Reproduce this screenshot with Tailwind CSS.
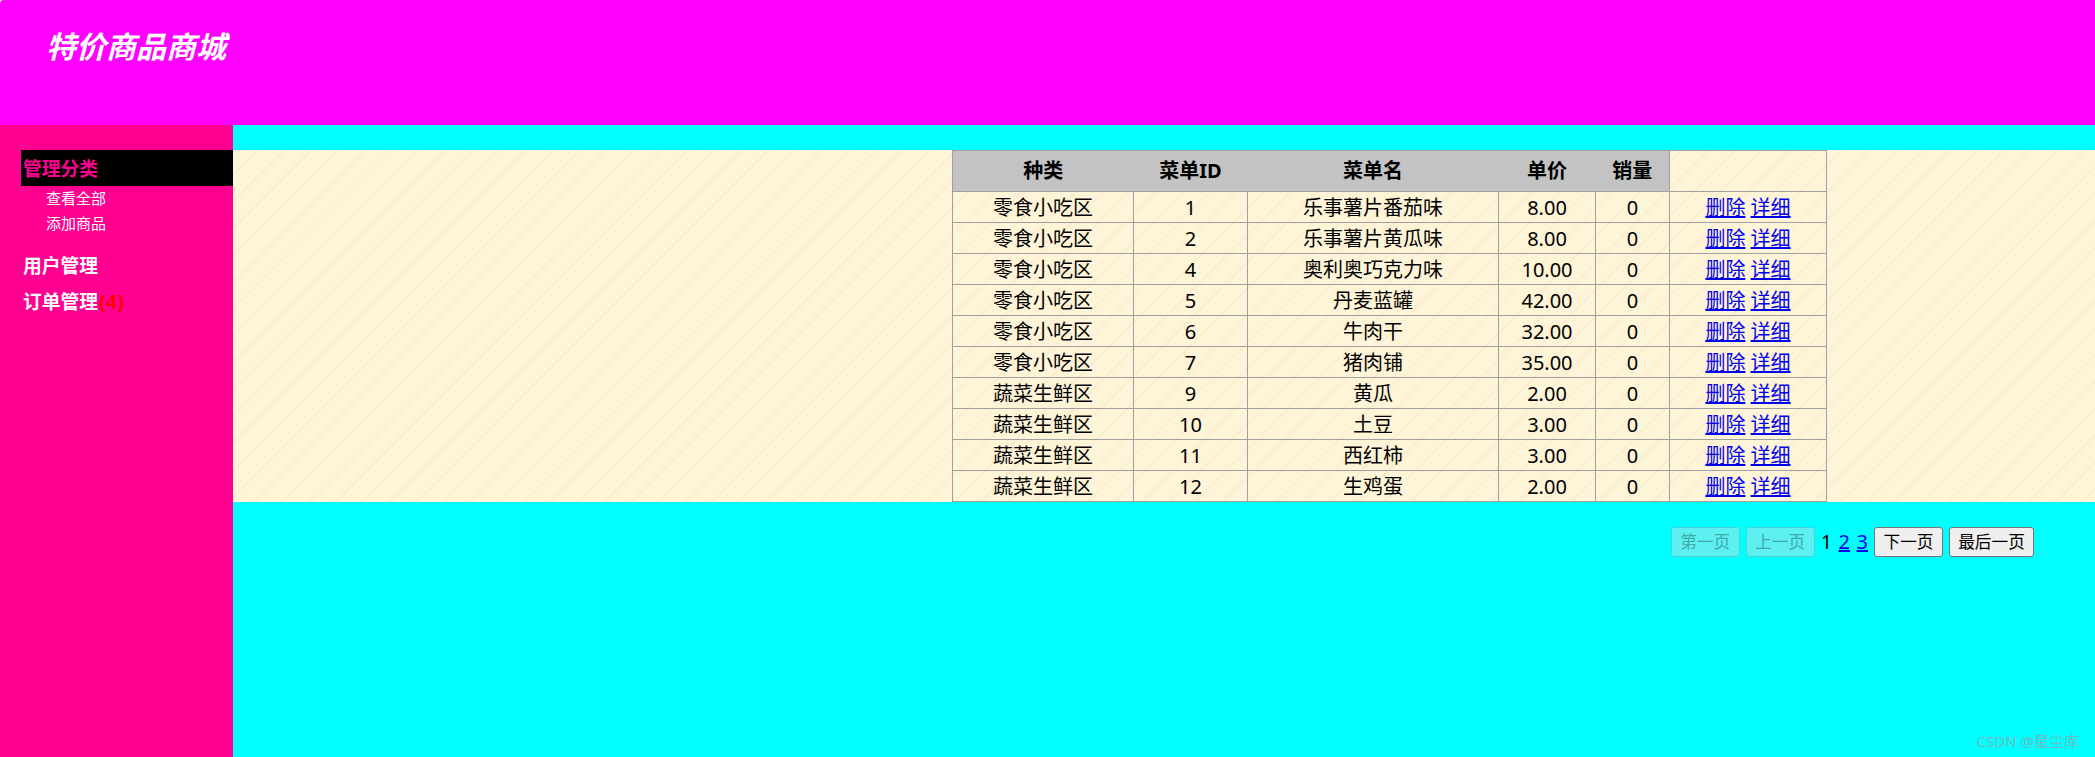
<!DOCTYPE html>
<html lang="zh-CN">
<head>
  <meta charset="UTF-8">
  <title>特价商品商城</title>
  <script src="https://cdn.jsdelivr.net/npm/@tailwindcss/browser@4"></script>
</head>
<body class="relative h-[757px] w-[2095px] overflow-hidden bg-white font-['Noto_Sans','Noto_Sans_CJK_SC',sans-serif] text-black">
  <!-- 顶部 -->
  <header class="h-[125px] rounded-tl-[4px] bg-[#ff00ff] pl-[46px] pt-[26px]">
    <h1 class="text-[30px] leading-[42px] font-bold italic text-white">特价商品商城</h1>
  </header>

  <div class="flex h-[632px]">
    <!-- 左侧菜单 -->
    <aside class="w-[233px] shrink-0 bg-[#ff0090] pl-[21px] pt-[25px]">
      <div class="h-[36px] bg-black pl-[2px] pt-[2px] text-[18.75px] leading-[34px] font-bold text-[#ff0090]">管理分类</div>
      <ul class="pl-[25px] text-[15px] leading-[25px] text-white">
        <li>查看全部</li>
        <li>添加商品</li>
      </ul>
      <div class="pl-[2px] pt-[12px] text-[18.75px] leading-[36px] font-bold text-white">用户管理</div>
      <div class="pl-[2px] text-[18.75px] leading-[36px] font-bold text-white">订单管理<span class="ml-[1px] text-[20px] text-[#ff0000]">(4)</span></div>
    </aside>

    <!-- 内容 -->
    <main class="flex-1 bg-[#00ffff] pt-[25px]">
      <div class="h-[352px] bg-[#fef4d8] bg-[repeating-linear-gradient(135deg,#fef4d8_0px,#fef4d8_16px,#fbeed0_17px,#fbeed0_18px,#fef4d8_19px)] pl-[719px]">
        <table class="w-[874px] table-fixed border-collapse text-center text-[20px] leading-[30px] [&_a]:text-[#0000ee] [&_a]:underline [&_td]:border [&_td]:border-[#a0a0a0] [&_td]:pt-[2px] [&_td]:leading-[28px] [&_tbody_tr]:h-[31px]">
          <colgroup>
            <col class="w-[181px]">
            <col class="w-[114px]">
            <col class="w-[251px]">
            <col class="w-[97px]">
            <col class="w-[74px]">
            <col class="w-[157px]">
          </colgroup>
          <thead>
            <tr class="h-[41px] font-bold">
              <th class="border-y border-l border-[#a0a0a0] bg-[#c3c3c3]">种类</th>
              <th class="border-y border-[#a0a0a0] bg-[#c3c3c3]">菜单ID</th>
              <th class="border-y border-[#a0a0a0] bg-[#c3c3c3]">菜单名</th>
              <th class="border-y border-[#a0a0a0] bg-[#c3c3c3]">单价</th>
              <th class="border-y border-[#a0a0a0] bg-[#c3c3c3]">销量</th>
              <th class="border border-[#a0a0a0]"></th>
            </tr>
          </thead>
          <tbody>
            <tr><td>零食小吃区</td><td>1</td><td>乐事薯片番茄味</td><td>8.00</td><td>0</td><td><a href="#">删除</a> <a href="#">详细</a></td></tr>
            <tr><td>零食小吃区</td><td>2</td><td>乐事薯片黄瓜味</td><td>8.00</td><td>0</td><td><a href="#">删除</a> <a href="#">详细</a></td></tr>
            <tr><td>零食小吃区</td><td>4</td><td>奥利奥巧克力味</td><td>10.00</td><td>0</td><td><a href="#">删除</a> <a href="#">详细</a></td></tr>
            <tr><td>零食小吃区</td><td>5</td><td>丹麦蓝罐</td><td>42.00</td><td>0</td><td><a href="#">删除</a> <a href="#">详细</a></td></tr>
            <tr><td>零食小吃区</td><td>6</td><td>牛肉干</td><td>32.00</td><td>0</td><td><a href="#">删除</a> <a href="#">详细</a></td></tr>
            <tr><td>零食小吃区</td><td>7</td><td>猪肉铺</td><td>35.00</td><td>0</td><td><a href="#">删除</a> <a href="#">详细</a></td></tr>
            <tr><td>蔬菜生鲜区</td><td>9</td><td>黄瓜</td><td>2.00</td><td>0</td><td><a href="#">删除</a> <a href="#">详细</a></td></tr>
            <tr><td>蔬菜生鲜区</td><td>10</td><td>土豆</td><td>3.00</td><td>0</td><td><a href="#">删除</a> <a href="#">详细</a></td></tr>
            <tr><td>蔬菜生鲜区</td><td>11</td><td>西红柿</td><td>3.00</td><td>0</td><td><a href="#">删除</a> <a href="#">详细</a></td></tr>
            <tr><td>蔬菜生鲜区</td><td>12</td><td>生鸡蛋</td><td>2.00</td><td>0</td><td><a href="#">删除</a> <a href="#">详细</a></td></tr>
          </tbody>
        </table>
      </div>

      <!-- 分页 -->
      <div class="flex items-center justify-end pr-[61px] pt-[25px] text-[20px] leading-[30px]">
        <button disabled class="h-[30px] w-[69px] rounded-[3px] border border-[#44d4d4] bg-[#5ef0f0] text-[16.67px] leading-none text-[#3fa9a9]">第一页</button>
        <button disabled class="ml-[6px] h-[30px] w-[69px] rounded-[3px] border border-[#44d4d4] bg-[#5ef0f0] text-[16.67px] leading-none text-[#3fa9a9]">上一页</button>
        <span class="ml-[6px]">1</span>
        <a href="#" class="ml-[6.5px] text-[#0000ee] underline">2</a>
        <a href="#" class="ml-[6.5px] text-[#0000ee] underline">3</a>
        <button class="ml-[6px] h-[30px] w-[69px] rounded-[3px] border border-[#767676] bg-[#efefef] text-[16.67px] leading-none">下一页</button>
        <button class="ml-[6px] h-[30px] w-[85px] rounded-[3px] border border-[#767676] bg-[#efefef] text-[16.67px] leading-none">最后一页</button>
      </div>
    </main>
  </div>

  <!-- 水印 -->
  <div class="absolute bottom-[6px] right-[16px] text-[15px] leading-[20px] text-[#6fbabf]">CSDN @星尘库</div>
</body>
</html>
